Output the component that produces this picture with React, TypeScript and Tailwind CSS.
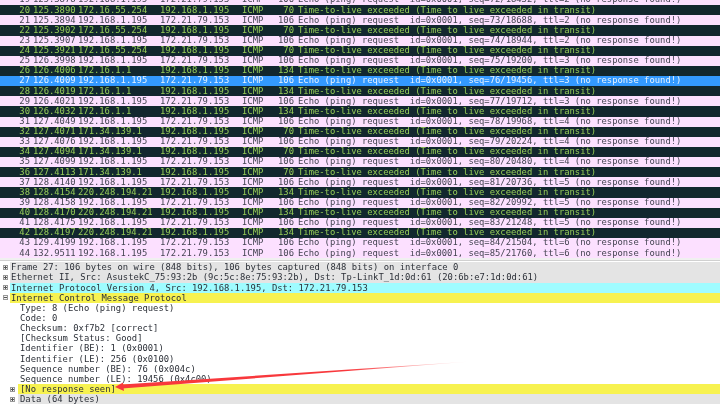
type Row = { no: number; time: string; src: string; dst: string; len: number; info: string; dark: boolean }

const req = (seq: number, ttl: number) =>
  `Echo (ping) request  id=0x0001, seq=${seq}/${seq * 256}, ttl=${ttl} (no response found!)`
const ttlInfo = 'Time-to-live exceeded (Time to live exceeded in transit)'
const me = '192.168.1.195'
const target = '172.21.79.153'

const rows: Row[] = [
  { no: 19, time: '125.3878', src: me, dst: target, len: 106, info: req(72, 2), dark: false },
  { no: 20, time: '125.3890', src: '172.16.55.254', dst: me, len: 70, info: ttlInfo, dark: true },
  { no: 21, time: '125.3894', src: me, dst: target, len: 106, info: req(73, 2), dark: false },
  { no: 22, time: '125.3902', src: '172.16.55.254', dst: me, len: 70, info: ttlInfo, dark: true },
  { no: 23, time: '125.3907', src: me, dst: target, len: 106, info: req(74, 2), dark: false },
  { no: 24, time: '125.3921', src: '172.16.55.254', dst: me, len: 70, info: ttlInfo, dark: true },
  { no: 25, time: '126.3998', src: me, dst: target, len: 106, info: req(75, 3), dark: false },
  { no: 26, time: '126.4006', src: '172.16.1.1', dst: me, len: 134, info: ttlInfo, dark: true },
  { no: 27, time: '126.4009', src: me, dst: target, len: 106, info: req(76, 3), dark: false },
  { no: 28, time: '126.4019', src: '172.16.1.1', dst: me, len: 134, info: ttlInfo, dark: true },
  { no: 29, time: '126.4021', src: me, dst: target, len: 106, info: req(77, 3), dark: false },
  { no: 30, time: '126.4032', src: '172.16.1.1', dst: me, len: 134, info: ttlInfo, dark: true },
  { no: 31, time: '127.4049', src: me, dst: target, len: 106, info: req(78, 4), dark: false },
  { no: 32, time: '127.4071', src: '171.34.139.1', dst: me, len: 70, info: ttlInfo, dark: true },
  { no: 33, time: '127.4076', src: me, dst: target, len: 106, info: req(79, 4), dark: false },
  { no: 34, time: '127.4094', src: '171.34.139.1', dst: me, len: 70, info: ttlInfo, dark: true },
  { no: 35, time: '127.4099', src: me, dst: target, len: 106, info: req(80, 4), dark: false },
  { no: 36, time: '127.4113', src: '171.34.139.1', dst: me, len: 70, info: ttlInfo, dark: true },
  { no: 37, time: '128.4140', src: me, dst: target, len: 106, info: req(81, 5), dark: false },
  { no: 38, time: '128.4154', src: '220.248.194.21', dst: me, len: 134, info: ttlInfo, dark: true },
  { no: 39, time: '128.4158', src: me, dst: target, len: 106, info: req(82, 5), dark: false },
  { no: 40, time: '128.4170', src: '220.248.194.21', dst: me, len: 134, info: ttlInfo, dark: true },
  { no: 41, time: '128.4175', src: me, dst: target, len: 106, info: req(83, 5), dark: false },
  { no: 42, time: '128.4197', src: '220.248.194.21', dst: me, len: 134, info: ttlInfo, dark: true },
  { no: 43, time: '129.4199', src: me, dst: target, len: 106, info: req(84, 6), dark: false },
  { no: 44, time: '132.9511', src: me, dst: target, len: 106, info: req(85, 6), dark: false },
]

function PacketRow({ row }: { row: Row }) {
  const selected = row.no === 27
  const tone = selected
    ? 'bg-[#3399ff] text-[#e8f3ff]'
    : row.dark
      ? 'bg-[#12272e] text-[#96cc58]'
      : 'bg-[#fce0ff] text-[#444452]'
  return (
    <div className={`flex h-[10.125px] items-center whitespace-pre ${tone}`}>
      <span className="w-[30px] shrink-0 text-right">{row.no}</span>
      <span className="ml-[3px] w-[45px] shrink-0">{row.time}</span>
      <span className="w-[82px] shrink-0">{row.src}</span>
      <span className="w-[82px] shrink-0">{row.dst}</span>
      <span className="w-[34px] shrink-0">ICMP</span>
      <span className="w-[18px] shrink-0 text-right">{row.len}</span>
      <span className="ml-[4px]">{row.info}</span>
    </div>
  )
}

function Toggle({ open }: { open?: boolean }) {
  return (
    <span className="relative block h-[5px] w-[5px] shrink-0 border border-[#9a9a9a] bg-[#f4f4f4]">
      <span className="absolute left-0 top-[1px] h-px w-[3px] bg-[#555]" />
      {!open && <span className="absolute left-[1px] top-0 h-[3px] w-px bg-[#555]" />}
    </span>
  )
}

function TreeHead({ text, bg, open }: { text: string; bg: string; open?: boolean }) {
  return (
    <div className="flex h-[10.15px] items-center">
      <span className="flex w-[10px] shrink-0 justify-center bg-white pl-[1px]">
        <Toggle open={open} />
      </span>
      <span className={`h-full flex-1 whitespace-pre pl-[1px] leading-[10.15px] ${bg}`}>{text}</span>
    </div>
  )
}

function TreeLeaf({ text }: { text: string }) {
  return <div className="h-[10.15px] whitespace-pre pl-[20px] leading-[10.15px]">{text}</div>
}

function TreeSub({ text, bg }: { text: string; bg: string }) {
  return (
    <div className="flex h-[10.15px] items-center">
      <span className="flex w-[18px] shrink-0 justify-end pr-[3px]">
        <Toggle />
      </span>
      <span className={`h-full flex-1 whitespace-pre pl-[2px] leading-[10.15px] ${bg}`}>{text}</span>
    </div>
  )
}

export default function App() {
  return (
    <div className="relative h-[411px] w-[720px] overflow-hidden bg-white font-['DejaVu_Sans_Mono',monospace] text-[8.86px] text-[#2c3038]">
      <div className="blur-[0.35px]">
        <div className="-mt-[5px]">
          {rows.map((row) => (
            <PacketRow key={row.no} row={row} />
          ))}
        </div>
        <div className="h-[3px] border-b border-[#d0d0d0] bg-[#f0f0f0]" />
        <div className="mt-[1px]">
          <TreeHead text="Frame 27: 106 bytes on wire (848 bits), 106 bytes captured (848 bits) on interface 0" bg="bg-[#e4e4e4]" />
          <TreeHead text="Ethernet II, Src: AsustekC_75:93:2b (9c:5c:8e:75:93:2b), Dst: Tp-LinkT_1d:0d:61 (20:6b:e7:1d:0d:61)" bg="bg-[#e4e4e4]" />
          <TreeHead text="Internet Protocol Version 4, Src: 192.168.1.195, Dst: 172.21.79.153" bg="bg-[#9ffcff]" />
          <TreeHead text="Internet Control Message Protocol" bg="bg-[#f7f250]" open />
          <TreeLeaf text="Type: 8 (Echo (ping) request)" />
          <TreeLeaf text="Code: 0" />
          <TreeLeaf text="Checksum: 0xf7b2 [correct]" />
          <TreeLeaf text="[Checksum Status: Good]" />
          <TreeLeaf text="Identifier (BE): 1 (0x0001)" />
          <TreeLeaf text="Identifier (LE): 256 (0x0100)" />
          <TreeLeaf text="Sequence number (BE): 76 (0x004c)" />
          <TreeLeaf text="Sequence number (LE): 19456 (0x4c00)" />
          <TreeSub text="[No response seen]" bg="bg-[#f7f250]" />
          <TreeSub text="Data (64 bytes)" bg="bg-[#e4e4e4]" />
        </div>
      </div>
      <svg className="absolute left-0 top-0" width="720" height="411" viewBox="0 0 720 411">
        <defs>
          <linearGradient id="shaft" gradientUnits="userSpaceOnUse" x1="118" y1="388" x2="472" y2="362">
            <stop offset="0" stopColor="#f8383c" />
            <stop offset="0.65" stopColor="#f8383c" />
            <stop offset="1" stopColor="#f8383c" stopOpacity="0" />
          </linearGradient>
        </defs>
        <polygon points="122,384.5 471,361.5 122,388.5" fill="url(#shaft)" />
        <polygon points="115,387 123,382.5 124,391" fill="#f8383c" />
      </svg>
    </div>
  )
}
